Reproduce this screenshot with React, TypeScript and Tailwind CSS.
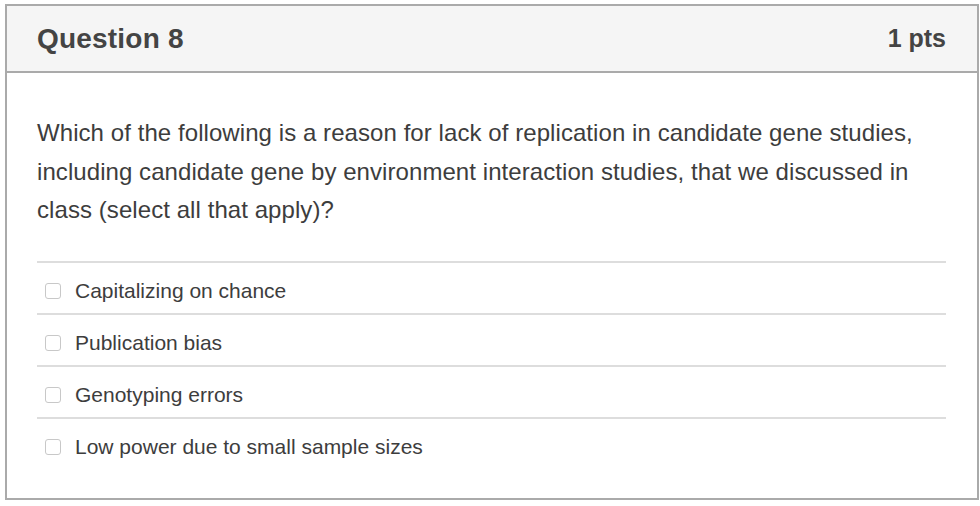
import React from "react";

const options = [
  "Capitalizing on chance",
  "Publication bias",
  "Genotyping errors",
  "Low power due to small sample sizes",
];

const App: React.FC = () => {
  return (
    <div
      className="w-[980px] h-[506px] bg-white pl-[5px] pt-[4px]"
      style={{ fontFamily: '"Liberation Sans", Arial, sans-serif' }}
    >
      <div className="w-[974px] h-[496px] border-2 border-[#aaaaaa] bg-white flex flex-col">
        <div className="h-[67px] bg-[#f5f5f5] border-b-2 border-[#aaaaaa] flex items-center justify-between pl-[30px] pr-[31px]">
          <h2 className="text-[28px] font-bold text-[#444444] tracking-[0.2px]">Question 8</h2>
          <span className="text-[25px] font-bold text-[#444444]">1 pts</span>
        </div>
        <div className="px-[30px] pt-[41px]">
          <p className="text-[24px] leading-[38.5px] tracking-[0.07px] text-[#3d3d3d]">
            Which of the following is a reason for lack of replication in candidate gene studies,
            including candidate gene by environment interaction studies, that we discussed in
            class (select all that apply)?
          </p>
          <ul className="mt-[31px] pr-[1px]">
            {options.map((opt) => (
              <li
                key={opt}
                className="border-t-2 border-[#dddddd] h-[52px] flex items-center pl-[8px] pt-[7px]"
              >
                <span className="w-[16px] h-[16px] rounded-[3px] border border-[#c8c8c8] bg-white mr-[14px] shrink-0" />
                <span className="text-[21px] text-[#3d3d3d]">{opt}</span>
              </li>
            ))}
          </ul>
        </div>
      </div>
    </div>
  );
};

export default App;
